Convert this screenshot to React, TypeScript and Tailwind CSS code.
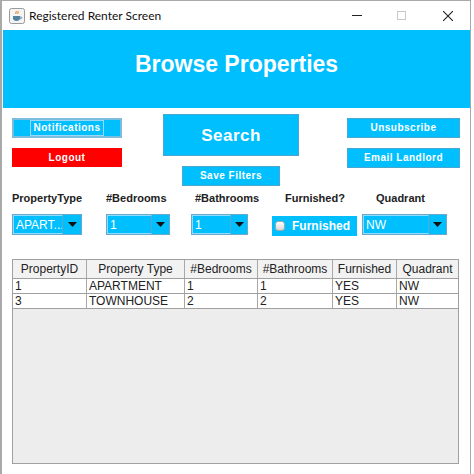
import React from "react";

type Col = { label: string; w: number };

const cols: Col[] = [
  { label: "PropertyID", w: 74 },
  { label: "Property Type", w: 98 },
  { label: "#Bedrooms", w: 73 },
  { label: "#Bathrooms", w: 75 },
  { label: "Furnished", w: 64 },
  { label: "Quadrant", w: 61 },
];

const rows = [
  ["1", "APARTMENT", "1", "1", "YES", "NW"],
  ["3", "TOWNHOUSE", "2", "2", "YES", "NW"],
];

function JavaIcon() {
  return (
    <svg width="16" height="16" viewBox="0 0 16 16">
      <rect x="0.5" y="0.5" width="15" height="15" rx="2" fill="#f4f4f4" stroke="#9a9a9a" />
      <path d="M7 3c1 1-1 2 0 3M9 3c1 1-1 2 0 3" stroke="#e76f00" strokeWidth="1" fill="none" />
      <path d="M4 8h7v2.5c0 1.5-1.5 2.5-3.5 2.5S4 12 4 10.5z" fill="#5382a1" />
      <path d="M11 9h1.2c.8 0 .8 1.6 0 1.6H11" stroke="#5382a1" strokeWidth="0.8" fill="none" />
    </svg>
  );
}

function Arrow() {
  return (
    <svg width="9" height="5" viewBox="0 0 9 5">
      <path d="M0 0h9L4.5 5z" fill="#111" />
    </svg>
  );
}

function Combo({ value, w, field }: { value: string; w: number; field: number }) {
  return (
    <div
      className="h-[21px] flex bg-[#00bfff] border border-[#68a9cc] shrink-0"
      style={{ width: w }}
    >
      <div
        className="h-full border border-[#8fdcff] border-r-[#5aa6cf] flex items-center pl-[2px] text-white text-[12px] leading-none overflow-hidden whitespace-nowrap"
        style={{ width: field }}
      >
        {value}
      </div>
      <div className="flex-1 flex items-center justify-center">
        <Arrow />
      </div>
    </div>
  );
}

function Btn({ children, className }: { children: React.ReactNode; className: string }) {
  return (
    <div
      className={
        "flex items-center justify-center text-white font-bold text-[10px] tracking-[0.5px] leading-none border " +
        className
      }
    >
      {children}
    </div>
  );
}

export default function App() {
  return (
    <div className="w-[474px] h-[474px] bg-white overflow-hidden font-['Liberation_Sans',Arial,sans-serif]">
      <div className="w-[471px] h-[474px] border-t border-l-2 border-r border-[#a9a9a9] flex flex-col">
        {/* title bar */}
        <div className="h-[29px] shrink-0 flex items-center">
          <div className="ml-[7px]">
            <JavaIcon />
          </div>
          <span className="ml-[4px] text-[12px] text-[#111] font-['Lato',sans-serif]">Registered Renter Screen</span>
          <div className="ml-auto flex items-center">
            <div className="w-[10px] h-px bg-[#222] mr-[35px]" />
            <div className="w-[9px] h-[9px] border border-[#c8c8c8] mr-[37px]" />
            <svg width="10" height="10" viewBox="0 0 10 10" className="mr-[17px]">
              <path d="M0 0L10 10M10 0L0 10" stroke="#222" strokeWidth="1.1" />
            </svg>
          </div>
        </div>

        <div className="pl-px pb-[10px] flex-1 min-h-0 flex flex-col">
          <header className="h-[78px] shrink-0 bg-[#00bfff] flex items-center justify-center pb-[9px]">
            <h1 className="text-white font-bold text-[23px] leading-none">Browse Properties</h1>
          </header>

          {/* buttons */}
          <div className="flex items-start pl-[9px] shrink-0">
            <div className="flex flex-col mt-[10px] w-[110px]">
              <Btn className="h-[20px] bg-[#00bfff] border-2 border-[#7cbcdc]">
                <span className="px-[2px] py-[2px] border border-[#9ad8f5]">Notifications</span>
              </Btn>
              <Btn className="h-[19px] mt-[10px] bg-[#ff0000] border-[#ff0000]">Logout</Btn>
            </div>
            <div className="flex flex-col items-center ml-[41px] mt-[6px]">
              <Btn className="w-[136px] h-[42px] bg-[#00bfff] border-[#4aa7d2] text-[17px] tracking-[0.3px]">Search</Btn>
              <Btn className="w-[98px] h-[20px] mt-[10px] bg-[#00bfff] border-[#4aa7d2]">Save Filters</Btn>
            </div>
            <div className="flex flex-col ml-[48px] mt-[10px]">
              <Btn className="w-[113px] h-[20px] bg-[#00bfff] border-[#4aa7d2]">Unsubscribe</Btn>
              <Btn className="w-[113px] h-[20px] mt-[10px] bg-[#00bfff] border-[#4aa7d2]">Email Landlord</Btn>
            </div>
          </div>

          {/* filter labels */}
          <div className="flex shrink-0 pl-[9px] mt-[6px] text-[11px] leading-[13px] font-bold text-[#222]">
            <div className="w-[94px]">PropertyType</div>
            <div className="w-[89px]">#Bedrooms</div>
            <div className="w-[90px]">#Bathrooms</div>
            <div className="w-[91px]">Furnished?</div>
            <div>Quadrant</div>
          </div>

          {/* filter controls */}
          <div className="flex shrink-0 items-start pl-[9px] mt-[9px]">
            <Combo value="APART..." w={70} field={50} />
            <div className="ml-[24px]">
              <Combo value="1" w={64} field={45} />
            </div>
            <div className="ml-[21px]">
              <Combo value="1" w={57} field={39} />
            </div>
            <div className="ml-[24px] mt-[2px] w-[85px] h-[20px] bg-[#00bfff] flex items-center pl-[3px] shrink-0">
              <div className="w-[10px] h-[10px] rounded-[3px] border border-[#9aa] bg-gradient-to-b from-white to-[#d8d8d8]" />
              <span className="ml-[7px] text-white font-bold text-[12px] leading-none">Furnished</span>
            </div>
            <div className="ml-[5px]">
              <Combo value="NW" w={85} field={66} />
            </div>
          </div>

          {/* table */}
          <div className="ml-[9px] mt-[23px] w-[447px] flex-1 min-h-0 border border-[#a0a0a0] bg-[#ededed] flex flex-col text-[12px] text-[#222]">
            <div className="flex h-[19px] shrink-0 bg-[#f2f2f2] border-b border-[#a0a0a0]">
              {cols.map((c, i) => (
                <div
                  key={c.label}
                  className={"flex items-center justify-center " + (i < cols.length - 1 ? "border-r border-[#a8a8a8]" : "")}
                  style={{ width: c.w }}
                >
                  {c.label}
                </div>
              ))}
            </div>
            {rows.map((r) => (
              <div key={r[0]} className="flex h-[15px] shrink-0 bg-white border-b border-[#a0a0a0]">
                {r.map((v, i) => (
                  <div
                    key={i}
                    className={"flex items-center pl-[2px] leading-none " + (i < r.length - 1 ? "border-r border-[#a8a8a8]" : "")}
                    style={{ width: cols[i].w }}
                  >
                    {v}
                  </div>
                ))}
              </div>
            ))}
          </div>
        </div>
      </div>
    </div>
  );
}
